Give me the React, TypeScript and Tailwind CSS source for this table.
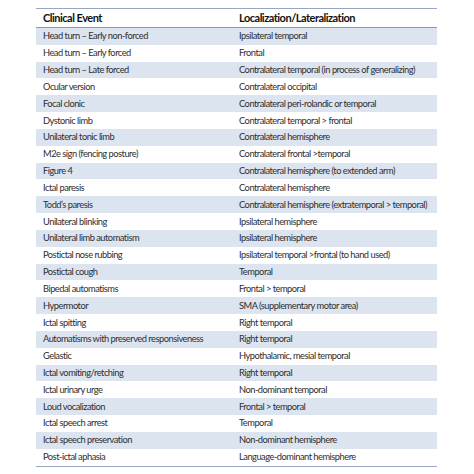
import React from "react";

const rows: [string, string][] = [
  ["Head turn – Early non-forced", "Ipsilateral temporal"],
  ["Head turn – Early forced", "Frontal"],
  ["Head turn – Late forced", "Contralateral temporal (in process of generalizing)"],
  ["Ocular version", "Contralateral occipital"],
  ["Focal clonic", "Contralateral peri-rolandic or temporal"],
  ["Dystonic limb", "Contralateral temporal > frontal"],
  ["Unilateral tonic limb", "Contralateral hemisphere"],
  ["M2e sign (fencing posture)", "Contralateral frontal >temporal"],
  ["Figure 4", "Contralateral hemisphere (to extended  arm)"],
  ["Ictal paresis", "Contralateral hemisphere"],
  ["Todd’s paresis", "Contralateral hemisphere (extratemporal > temporal)"],
  ["Unilateral blinking", "Ipsilateral hemisphere"],
  ["Unilateral limb automatism", "Ipsilateral hemisphere"],
  ["Postictal nose rubbing", "Ipsilateral temporal >frontal (to hand used)"],
  ["Postictal cough", "Temporal"],
  ["Bipedal automatisms", "Frontal > temporal"],
  ["Hypermotor", "SMA (supplementary motor area)"],
  ["Ictal spitting", "Right temporal"],
  ["Automatisms with preserved responsiveness", "Right temporal"],
  ["Gelastic", "Hypothalamic, mesial temporal"],
  ["Ictal vomiting/retching", "Right temporal"],
  ["Ictal urinary urge", "Non-dominant temporal"],
  ["Loud vocalization", "Frontal > temporal"],
  ["Ictal speech arrest", "Temporal"],
  ["Ictal speech preservation", "Non-dominant hemisphere"],
  ["Post-ictal aphasia", "Language-dominant hemisphere"],
];

export default function App() {
  return (
    <div
      className="w-[474px] h-[474px] bg-white pt-[8px] pl-[36px]"
      style={{ fontFamily: "Lato, 'Open Sans', sans-serif" }}
    >
      <div className="w-[401px] border-t border-b border-[#95a7c2]">
        <div className="flex h-[19px] items-center border-b-[1.5px] border-[#8799b5] text-[11px] font-bold tracking-[-0.5px] text-[#111]">
          <div className="w-[196px] shrink-0 pl-[7px]">Clinical Event</div>
          <div className="flex-1 pl-[7px] whitespace-nowrap">Localization/Lateralization</div>
        </div>
        {rows.map((r, i) => (
          <div
            key={i}
            className={
              "flex h-[16.83px] items-center text-[9.3px] tracking-[-0.5px] text-[#2e2e2e] " +
              (i % 2 === 0 ? "bg-[#dce4f0]" : "bg-white")
            }
          >
            <div className="w-[196px] shrink-0 pl-[7px] whitespace-nowrap">{r[0]}</div>
            <div className="flex-1 pl-[7px] whitespace-nowrap">{r[1]}</div>
          </div>
        ))}
      </div>
    </div>
  );
}
